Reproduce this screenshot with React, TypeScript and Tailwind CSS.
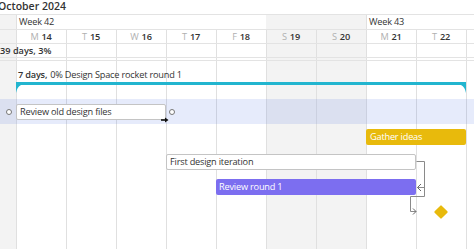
const days = [
  { d: "S", n: 13, we: true },
  { d: "M", n: 14 },
  { d: "T", n: 15 },
  { d: "W", n: 16 },
  { d: "T", n: 17 },
  { d: "F", n: 18 },
  { d: "S", n: 19, we: true },
  { d: "S", n: 20, we: true },
  { d: "M", n: 21 },
  { d: "T", n: 22 },
  { d: "W", n: 23 },
];

const cols = "grid grid-cols-[repeat(11,50px)]";

function Handle({ side }: { side: "left" | "right" }) {
  return (
    <span
      className={
        "absolute top-1/2 -translate-y-1/2 w-[6px] h-[6px] rounded-full border border-[#777] bg-white " +
        (side === "left" ? "-left-[11px]" : "-right-[10px]")
      }
    />
  );
}

export default function App() {
  return (
    <div className="relative w-[474px] h-[249px] overflow-hidden bg-white font-['Open_Sans',sans-serif] text-[9.2px] tracking-[-0.2px] text-[#333]">
      {/* month */}
      <div className="h-[15px] border-b border-[#e3e3e3] flex items-center">
        <span className="-ml-[2px] font-semibold text-[10.5px] tracking-normal">October 2024</span>
      </div>

      <div className="relative w-[550px] -ml-[34px] h-[234px]">
        {/* weekend shading */}
        <div className={"absolute inset-0 " + cols}>
          {days.map((d) => (
            <div key={d.n} className={d.we ? "bg-[#f3f3f3]" : ""} />
          ))}
        </div>
        {/* day lines */}
        <div className={"absolute inset-x-0 top-[15px] bottom-0 " + cols}>
          {days.map((d) => (
            <div key={d.n} className={d.n === 13 ? "" : "border-l border-[#e0e0e0]"} />
          ))}
        </div>

        <div className="relative">
          {/* weeks */}
          <div className={"h-[15px] border-b border-[#e3e3e3] " + cols}>
            <div />
            <div className="col-span-7 border-l border-[#e0e0e0] pl-[2px] flex items-center">Week 42</div>
            <div className="col-span-3 border-l border-[#e0e0e0] pl-[2px] flex items-center">Week 43</div>
          </div>
          {/* days */}
          <div className={"h-[14px] border-b border-[#e3e3e3] " + cols}>
            {days.map((d) => (
              <div key={d.n} className="flex items-center justify-center gap-[3px]">
                <span className="text-[#b0b0b0]">{d.d}</span>
                <span className="font-semibold">{d.n}</span>
              </div>
            ))}
          </div>
          {/* summary */}
          <div className="h-[14px] border-b border-[#e3e3e3] flex items-center pl-[34px] font-semibold tracking-normal">
            39 days, 3%
          </div>
          <div className="h-[3px] border-b border-[#e3e3e3]" />

          {/* parent task */}
          <div className={"h-[38px] " + cols}>
            <div className="col-start-2 col-span-9 flex flex-col">
              <div className="h-[14px] mt-[7px] flex items-center pl-[2px] whitespace-nowrap">
                <span className="font-semibold">7 days,</span>
                <span className="ml-[3px]">0% Design Space rocket round 1</span>
              </div>
              <div className="relative h-[3px] -mt-[0.5px] bg-[#22b5cf]">
                <svg className="absolute left-0 top-full" width="5" height="8" viewBox="0 0 5 8">
                  <path d="M0 0 H5 Q1 2 0 8 Z" fill="#22b5cf" />
                </svg>
                <svg className="absolute right-0 top-full" width="5" height="8" viewBox="0 0 5 8">
                  <path d="M5 0 H0 Q4 2 5 8 Z" fill="#22b5cf" />
                </svg>
              </div>
            </div>
          </div>

          {/* Review old design files */}
          <div className={"h-[25px] bg-[rgba(90,120,230,0.15)] items-center " + cols}>
            <div className="relative col-start-2 col-span-3 h-[16px] rounded-[2px] border border-[#c4c4c4] bg-white flex items-center pl-[3px]">
              Review old design files
              <Handle side="left" />
              <Handle side="right" />
              <svg className="absolute -right-[4px] -bottom-[4px]" width="8" height="6" viewBox="0 0 8 6">
                <path d="M0 3 H5" stroke="#111" strokeWidth="1.6" />
                <path d="M4 0.5 L7.5 3 L4 5.5 Z" fill="#111" />
              </svg>
            </div>
          </div>

          {/* Gather ideas */}
          <div className={"h-[25px] items-center " + cols}>
            <div className="col-start-9 col-span-2 h-[16px] rounded-[2px] bg-[#e8ba0c] text-white flex items-center pl-[4px]">
              Gather ideas
            </div>
          </div>

          {/* First design iteration */}
          <div className={"h-[25px] items-center " + cols}>
            <div className="col-start-5 col-span-5 h-[16px] rounded-[2px] border border-[#c4c4c4] bg-white flex items-center pl-[3px]">
              First design iteration
            </div>
          </div>

          {/* Review round 1 */}
          <div className={"h-[25px] items-center " + cols}>
            <div className="col-start-6 col-span-4 h-[16px] rounded-[2px] bg-[#7c6ef0] text-white flex items-center pl-[3px]">
              Review round 1
            </div>
          </div>

          {/* milestone */}
          <div className={"h-[25px] items-center " + cols}>
            <div className="col-start-10 flex justify-center">
              <div className="w-[10px] h-[10px] rotate-45 rounded-[1px] bg-[#e8ba0c]" />
            </div>
          </div>
        </div>
      </div>

      {/* dependency lines */}
      <svg className="absolute left-0 top-0 pointer-events-none" width="474" height="249">
        <path d="M416.5 161.5 H424.5 V196.5 H410.5 V211.5 H416" fill="none" stroke="#8a8a8a" strokeWidth="1" />
        <path d="M424.5 187.5 H417.5" fill="none" stroke="#8a8a8a" strokeWidth="1" />
        <path d="M421 184 L417.5 187.5 L421 191" fill="none" stroke="#666" strokeWidth="1" />
        <path d="M413 208.5 L416 211.5 L413 214.5" fill="none" stroke="#666" strokeWidth="1" />
      </svg>
    </div>
  );
}
